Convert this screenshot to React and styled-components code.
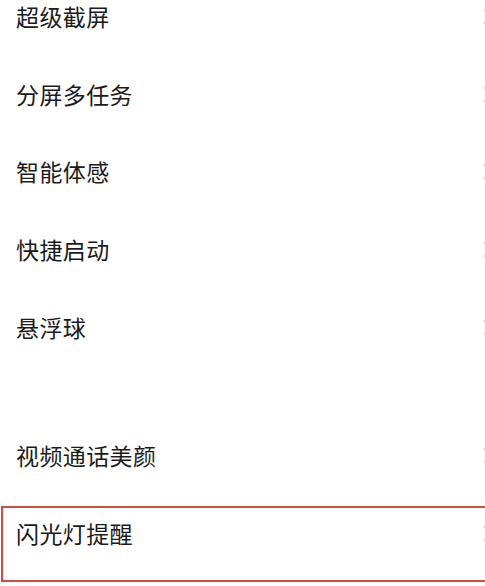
import React from "react";
import styled, { createGlobalStyle } from "styled-components";

const GlobalStyle = createGlobalStyle`
  html, body {
    margin: 0;
    padding: 0;
    background: #ffffff;
    overflow: hidden;
  }
  body {
    font-family: "Noto Sans CJK SC", "Noto Sans", sans-serif;
  }
`;

const Page = styled.div`
  width: 485px;
  height: 586px;
  overflow: hidden;
  background: #ffffff;
`;

const List = styled.div`
  display: flex;
  flex-direction: column;
  margin-top: -22px;
`;

const Row = styled.div`
  position: relative;
  display: flex;
  align-items: center;
  height: 77.6px;
  padding-left: 16px;
  box-sizing: border-box;
`;

const Label = styled.span`
  font-size: 23px;
  line-height: 1;
  color: #1b1b1b;
  letter-spacing: 0.4px;
`;

const Chevron = styled.svg`
  margin-left: auto;
  margin-right: -6px;
  width: 9px;
  height: 17px;
  flex-shrink: 0;
`;

const Spacer = styled.div`
  height: 51px;
`;

const Highlight = styled.div`
  position: absolute;
  top: 11px;
  left: 1px;
  right: -10px;
  height: 76px;
  border: 2px solid #d24a42;
  box-sizing: border-box;
  pointer-events: none;
`;

const Arrow = () => (
  <Chevron viewBox="0 0 9 17">
    <path d="M1 1 L8 8.5 L1 16" fill="none" stroke="#dcdcdc" strokeWidth="1.5" />
  </Chevron>
);

const groups = [
  ["超级截屏", "分屏多任务", "智能体感", "快捷启动", "悬浮球"],
  ["视频通话美颜", "闪光灯提醒"],
];

const Item = ({ label, marked }) => (
  <Row>
    <Label>{label}</Label>
    <Arrow />
    {marked && <Highlight />}
  </Row>
);

export default function App() {
  return (
    <Page>
      <GlobalStyle />
      <List>
        {groups[0].map((l) => (
          <Item key={l} label={l} />
        ))}
        <Spacer />
        {groups[1].map((l) => (
          <Item key={l} label={l} marked={l === "闪光灯提醒"} />
        ))}
      </List>
    </Page>
  );
}
